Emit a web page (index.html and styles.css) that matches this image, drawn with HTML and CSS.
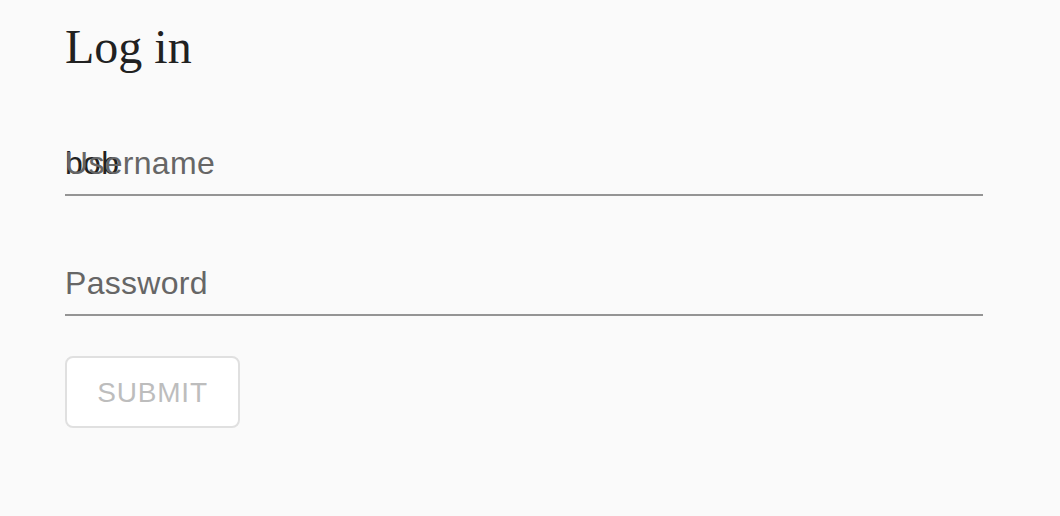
FILE: index.html
```html
<!DOCTYPE html>
<html lang="en">
<head>
<meta charset="utf-8">
<title>Log in</title>
<link rel="stylesheet" href="styles.css">
</head>
<body>
<main class="page">
  <h1 class="title">Log in</h1>
  <form class="form">
    <div class="field field-user">
      <input class="input" type="text" value="bob" aria-label="Username">
      <label class="label">Username</label>
    </div>
    <div class="field field-pass">
      <input class="input" type="password" aria-label="Password">
      <label class="label">Password</label>
    </div>
    <button class="submit" type="button" disabled>Submit</button>
  </form>
</main>
</body>
</html>
```
FILE: styles.css
```css
html, body {
  margin: 0;
  padding: 0;
  background: #fafafa;
}

.page {
  padding: 23px 0 0 65px;
  width: 918px;
}

.title {
  margin: 0;
  font-family: "Liberation Serif", "Times New Roman", serif;
  font-weight: normal;
  font-size: 48px;
  line-height: 48px;
  color: #212121;
}

.form {
  display: flex;
  flex-direction: column;
  align-items: flex-start;
}

.field {
  position: relative;
  width: 100%;
  padding: 1px 0 15px;
  border-bottom: 2px solid #949494;
}

.field-user {
  margin-top: 75px;
}

.field-pass {
  margin-top: 70px;
}

.input {
  display: block;
  width: 100%;
  height: 32px;
  margin: 0;
  padding: 0;
  border: 0;
  outline: none;
  background: transparent;
  font-family: "Liberation Sans", Arial, sans-serif;
  font-size: 32px;
  line-height: 32px;
  letter-spacing: 0.3px;
  color: #212121;
}

.label {
  position: absolute;
  top: 1px;
  left: 0;
  font-family: "Liberation Sans", Arial, sans-serif;
  font-size: 32px;
  line-height: 32px;
  letter-spacing: 0.3px;
  color: #666666;
  pointer-events: none;
}

.submit {
  margin-top: 40px;
  width: 175px;
  height: 72px;
  padding: 2px 0 0;
  border: 2px solid #e0e0e0;
  border-radius: 8px;
  background: #ffffff;
  font-family: "Liberation Sans", Arial, sans-serif;
  font-size: 28px;
  letter-spacing: 0.8px;
  text-transform: uppercase;
  color: #bdbdbd;
}
```
